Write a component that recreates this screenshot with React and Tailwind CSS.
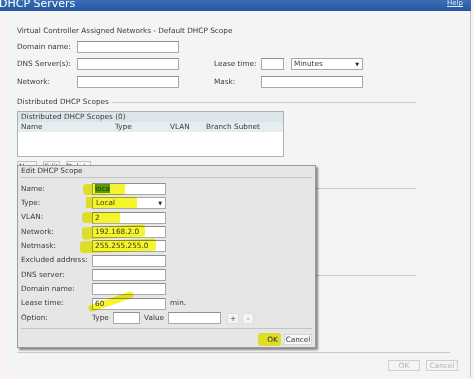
const Input = ({ className = '', children }) => (
  <div className={`h-[12px] bg-white border border-[#a9a9a9] border-t-[#8f8f8f] pl-[2px] leading-[10px] overflow-hidden whitespace-nowrap ${className}`}>
    {children}
  </div>
);

const Select = ({ className = '', value }) => (
  <div className={`h-[12px] bg-white border border-[#a9a9a9] flex items-center justify-between pl-[2px] pr-[3px] ${className}`}>
    <span className="leading-[10px]">{value}</span>
    <span className="text-[5px] leading-[5px] text-[#222]">▼</span>
  </div>
);

const Btn = ({ className = '', children }) => (
  <div className={`h-[11px] bg-[#f4f4f4] border border-[#c2c2c2] flex items-center justify-center leading-[9px] ${className}`}>
    {children}
  </div>
);

const Mark = ({ className = '' }) => (
  <div className={`absolute bg-[#f5f52e] mix-blend-multiply pointer-events-none ${className}`} />
);

const Row = ({ label, children }) => (
  <div className="relative h-[14.33px] flex items-center pl-[3px]">
    <span className="w-[71px] shrink-0">{label}</span>
    {children}
  </div>
);

export default function App() {
  return (
    <div className="w-[474px] h-[379px] bg-[#fbf3f0] overflow-hidden relative font-['DejaVu_Sans',sans-serif] text-[7.3px] text-[#3a3a3a]">
      {/* title bar */}
      <div className="w-[471px] h-[11px] bg-gradient-to-b from-[#3b6fb7] to-[#23569e] overflow-hidden flex justify-between">
        <span className="text-white text-[11px] leading-[11px] -mt-[2px] -ml-[1px] whitespace-nowrap">DHCP Servers</span>
        <span className="text-[#e3ecf8] underline text-[7px] leading-[7px] mr-[8px]">Help</span>
      </div>

      <div className="flex h-[366px]">
        <div className="w-[4px]" />
        <div className="w-[467px] bg-[#f4f4f4] border-r border-[#c4c4c4] pl-[13px] flex flex-col">
          <div className="mt-[15px] leading-[10px] whitespace-nowrap">Virtual Controller Assigned Networks - Default DHCP Scope</div>

          <div className="mt-[5px] flex items-center">
            <span className="w-[60px]">Domain name:</span>
            <Input className="w-[102px]" />
          </div>
          <div className="mt-[5px] flex items-center">
            <span className="w-[60px]">DNS Server(s):</span>
            <Input className="w-[102px]" />
            <span className="w-[47px] ml-[35px]">Lease time:</span>
            <Input className="w-[23px]" />
            <Select className="w-[72px] ml-[7px]" value="Minutes" />
          </div>
          <div className="mt-[6px] flex items-center">
            <span className="w-[60px]">Network:</span>
            <Input className="w-[102px]" />
            <span className="w-[47px] ml-[35px]">Mask:</span>
            <Input className="w-[102px]" />
          </div>

          <div className="mt-[9px] w-[399px] flex items-center leading-[10px]">
            <span className="whitespace-nowrap">Distributed DHCP Scopes</span>
            <div className="flex-1 ml-[3px] border-t border-[#c5ccd0]" />
          </div>

          <div className="mt-[4px] w-[267px] h-[46px] border border-[#a9b3b9] bg-white">
            <div className="h-[10px] bg-[#dce6ea] pl-[3px] leading-[10px]">Distributed DHCP Scopes (0)</div>
            <div className="h-[10px] bg-[#e6edf0] flex leading-[10px]">
              <span className="w-[97px] pl-[3px]">Name</span>
              <span className="w-[55px]">Type</span>
              <span className="w-[36px]">VLAN</span>
              <span>Branch Subnet</span>
            </div>
          </div>

          <div className="mt-[4px] flex gap-[6px]">
            <Btn className="w-[20px]">New</Btn>
            <Btn className="w-[17px]">Edit</Btn>
            <Btn className="w-[25px]">Delete</Btn>
          </div>

          <div className="mt-[16px] w-[399px] border-t border-[#c5ccd0]" />
          <div className="mt-[86px] w-[399px] border-t border-[#c5ccd0]" />
          <div className="mt-[76px] w-[433px] border-t border-[#c8c8c8]" />

          <div className="mt-[7px] w-[441px] flex justify-end gap-[6px] text-[#b4b4b4]">
            <div className="w-[32px] h-[11px] border border-[#cfcfcf] flex items-center justify-center leading-[9px]">OK</div>
            <div className="w-[32px] h-[11px] border border-[#cfcfcf] flex items-center justify-center leading-[9px]">Cancel</div>
          </div>
        </div>
      </div>

      {/* Edit DHCP Scope dialog */}
      <div className="absolute left-[17px] top-[165px] w-[299px] h-[183px] bg-[#e6e6e6] border border-[#9c9c9c] shadow-[2px_2px_2px_rgba(0,0,0,0.45)] flex flex-col">
        <div className="h-[11px] px-[3px] leading-[10px]">Edit DHCP Scope</div>
        <div className="mx-[3px] border-t border-[#c3c3c3]" />

        <div className="mt-[4px] flex flex-col">
          <Row label="Name:">
            <Input className="w-[74px]">
              <span className="bg-[#5f9f3f] text-[#203a12]">loca</span>
            </Input>
            <Mark className="left-[65px] top-[2px] w-[42px] h-[11px] rounded-l-[4px]" />
          </Row>
          <Row label="Type:">
            <Select className="w-[74px]" value={<span className="pl-[1px]">Local</span>} />
            <Mark className="left-[68px] top-[1px] w-[51px] h-[11px]" />
          </Row>
          <Row label="VLAN:">
            <Input className="w-[74px]">2</Input>
            <Mark className="left-[64px] top-[1px] w-[38px] h-[11px] rounded-l-[4px]" />
          </Row>
          <Row label="Network:">
            <Input className="w-[74px]">192.168.2.0</Input>
            <Mark className="left-[64px] top-[1px] w-[63px] h-[12px] -rotate-[3deg] rounded-[3px]" />
          </Row>
          <Row label="Netmask:">
            <Input className="w-[74px]">255.255.255.0</Input>
            <Mark className="left-[62px] top-[1px] w-[76px] h-[12px] -rotate-[2deg] rounded-[3px]" />
          </Row>
          <Row label="Excluded address:">
            <Input className="w-[74px]" />
          </Row>
          <Row label="DNS server:">
            <Input className="w-[74px]" />
          </Row>
          <Row label="Domain name:">
            <Input className="w-[74px]" />
          </Row>
          <Row label="Lease time:">
            <Input className="w-[74px]">60</Input>
            <span className="ml-[4px]">min.</span>
            <svg className="absolute left-[70px] -top-[6px] mix-blend-multiply pointer-events-none" width="48" height="22" viewBox="0 0 48 22">
              <path d="M4 17 Q20 12 42 4" stroke="#f5f52e" strokeWidth="7" strokeLinecap="round" fill="none" />
            </svg>
          </Row>
          <Row label="Option:">
            <span className="w-[21px]">Type</span>
            <Input className="w-[27px]" />
            <span className="w-[24px] ml-[4px]">Value</span>
            <Input className="w-[53px]" />
            <Btn className="w-[12px] ml-[6px] bg-[#f2f2f2] border-[#dcdcdc]">+</Btn>
            <Btn className="w-[12px] ml-[3px] bg-[#f2f2f2] border-[#dcdcdc]">-</Btn>
          </Row>
        </div>

        <div className="mt-[3px] mx-[3px] border-t border-[#c3c3c3]" />
        <div className="relative mt-[5px] flex justify-end gap-[2px] pr-[3px]">
          <Btn className="w-[19px] bg-transparent border-transparent text-[#2a2a2a]">OK</Btn>
          <Btn className="w-[28px] bg-[#f7f7f7] border-[#d4d4d4]">Cancel</Btn>
          <Mark className="left-[240px] -top-[1px] w-[23px] h-[13px] rounded-[3px]" />
        </div>
      </div>
    </div>
  );
}
